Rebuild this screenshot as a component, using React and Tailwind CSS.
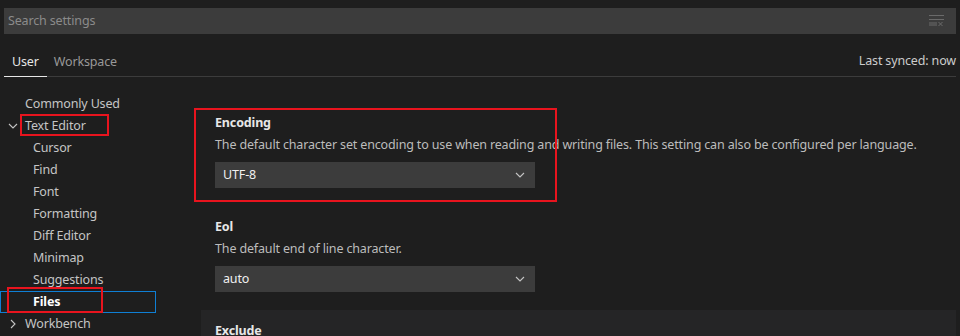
import { useState } from "react";

// Settings editor (dark theme) – search, scope tabs, TOC tree, setting items
const toc = [
    { key: "common", label: "Commonly Used", level: 0 },
    { key: "editor", label: "Text Editor", level: 0, expanded: true, marked: true },
    { key: "cursor", label: "Cursor", level: 1 },
    { key: "find", label: "Find", level: 1 },
    { key: "font", label: "Font", level: 1 },
    { key: "formatting", label: "Formatting", level: 1 },
    { key: "diff", label: "Diff Editor", level: 1 },
    { key: "minimap", label: "Minimap", level: 1 },
    { key: "suggest", label: "Suggestions", level: 1 },
    { key: "files", label: "Files", level: 1, marked: true },
    { key: "workbench", label: "Workbench", level: 0, expanded: false },
];

const Chevron = ({ open }) => (
    <svg width="10" height="10" viewBox="0 0 10 10" className="shrink-0">
        {open ? (
            <polyline points="1,3 5,7 9,3" fill="none" stroke="#c5c5c5" strokeWidth="1.1" />
        ) : (
            <polyline points="3,1 7,5 3,9" fill="none" stroke="#c5c5c5" strokeWidth="1.1" />
        )}
    </svg>
);

const ClearIcon = () => (
    <svg width="16" height="14" viewBox="0 0 16 14">
        <g stroke="#6a6a6a" strokeWidth="1">
            <line x1="1" y1="1.5" x2="16" y2="1.5" />
            <line x1="1" y1="5.5" x2="16" y2="5.5" />
            <line x1="1" y1="9" x2="9" y2="9" />
            <line x1="1" y1="11" x2="9" y2="11" />
            <line x1="10.5" y1="8" x2="14.5" y2="12" />
            <line x1="14.5" y1="8" x2="10.5" y2="12" />
        </g>
    </svg>
);

const Select = ({ value }) => (
    <div className="mt-[6px] w-[320px] h-[26px] bg-[#3c3c3c] flex items-center justify-between pl-2 pr-[10px] text-[#f0f0f0]">
        <span>{value}</span>
        <svg width="10" height="6" viewBox="0 0 10 6">
            <polyline points="1,1 5,5 9,1" fill="none" stroke="#c5c5c5" strokeWidth="1.1" />
        </svg>
    </div>
);

const Setting = ({ title, description, value, marked }) => (
    <div className="relative">
        {marked && (
            <div className="absolute -left-[21px] -top-[4px] w-[363px] h-[94px] border-2 border-[#e8141e] pointer-events-none" />
        )}
        <div className="h-[22px] leading-[22px] font-bold text-[#e7e7e7]">{title}</div>
        <div className="h-[22px] leading-[22px] text-[#bcbcbc] whitespace-nowrap">{description}</div>
        <Select value={value} />
    </div>
);

export default function App() {
    const [tab, setTab] = useState("user");
    const [selected, setSelected] = useState("files");

    return (
        <div className="w-[960px] h-[336px] overflow-hidden bg-[#1e1e1e] text-[12.5px] tracking-[-0.15px] text-[#cccccc] font-['Noto_Sans',sans-serif]">
            <div className="px-1 pt-2">
                <div className="h-[26px] bg-[#3c3c3c] flex items-center justify-between pl-1 pr-[12px]">
                    <span className="text-[#8b8b8b]">Search settings</span>
                    <ClearIcon />
                </div>
            </div>

            <div className="mx-1 h-[43px] flex items-end border-b border-[#3c3c3c]">
                <button
                    onClick={() => setTab("user")}
                    className={`px-2 h-[29px] -mb-px border-b ${tab === "user" ? "border-[#e7e7e7] text-[#e7e7e7]" : "border-transparent text-[#999999]"}`}
                >
                    User
                </button>
                <button
                    onClick={() => setTab("workspace")}
                    className={`px-[7px] h-[29px] -mb-px border-b ${tab === "workspace" ? "border-[#e7e7e7] text-[#e7e7e7]" : "border-transparent text-[#999999]"}`}
                >
                    Workspace
                </button>
                <div className="ml-auto h-[29px] flex items-center text-[#cccccc]">Last synced: now</div>
            </div>

            <div className="flex">
                <div className="w-[156px] pt-[16px] shrink-0">
                    {toc.map((item) => (
                        <div
                            key={item.key}
                            onClick={() => setSelected(item.key)}
                            className={`relative h-[22px] flex items-center border ${selected === item.key ? "border-[#0f7fd4]" : "border-transparent"}`}
                        >
                            <div className={`flex items-center ${item.level === 0 ? "pl-[7px]" : "pl-[32px]"}`}>
                                {item.level === 0 && (
                                    <span className="w-[17px] flex">
                                        {item.expanded !== undefined && <Chevron open={item.expanded} />}
                                    </span>
                                )}
                                <span className={`relative ${selected === item.key ? "font-bold text-white" : "text-[#c5c5c5]"}`}>
                                    {item.marked && item.level === 0 && (
                                        <span className="absolute -left-[5px] -top-[3px] w-[89px] h-[22px] border-2 border-[#e8141e]" />
                                    )}
                                    {item.marked && item.level === 1 && (
                                        <span className="absolute -left-[26px] -top-[6px] w-[96px] h-[26px] border-2 border-[#e8141e]" />
                                    )}
                                    {item.label}
                                </span>
                            </div>
                        </div>
                    ))}
                </div>

                <div className="flex-1 pl-[45px] pr-1">
                    <div className="pl-[14px] pt-[35px]">
                        <Setting
                            title="Encoding"
                            description="The default character set encoding to use when reading and writing files. This setting can also be configured per language."
                            value="UTF-8"
                            marked
                        />
                        <div className="mt-[28px]">
                            <Setting title="Eol" description="The default end of line character." value="auto" />
                        </div>
                    </div>
                    <div className="mt-[18px] bg-[#252526] pl-[14px] pt-[10px] h-[40px]">
                        <div className="h-[22px] leading-[22px] font-bold text-[#e7e7e7]">Exclude</div>
                    </div>
                </div>
            </div>
        </div>
    );
}
